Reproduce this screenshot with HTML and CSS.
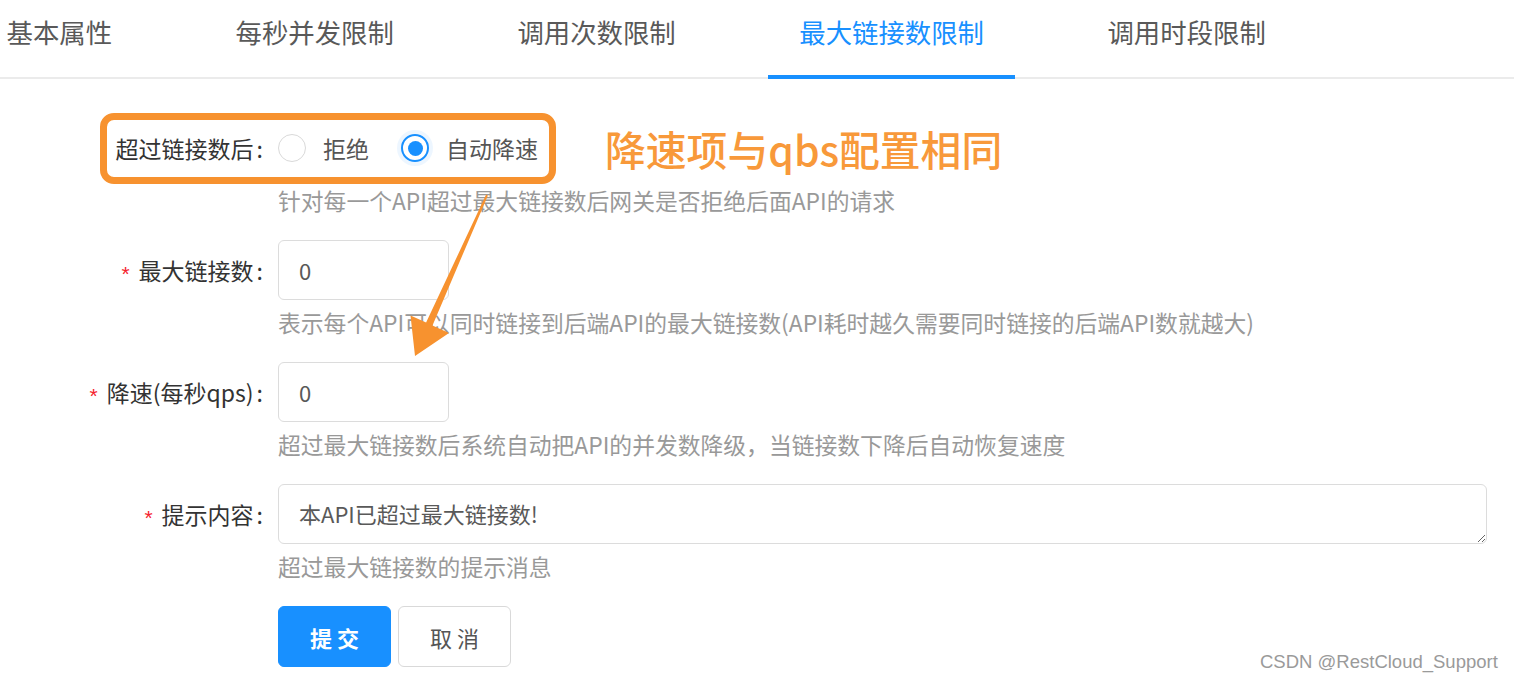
FILE: index.html
```html
<!DOCTYPE html>
<html lang="zh-CN">
<head>
<meta charset="utf-8">
<title>最大链接数限制</title>
<link rel="stylesheet" href="styles.css">
</head>
<body>
<div class="page">
  <nav class="tabs">
    <div class="tab">基本属性</div>
    <div class="tab">每秒并发限制</div>
    <div class="tab">调用次数限制</div>
    <div class="tab active">最大链接数限制</div>
    <div class="tab">调用时段限制</div>
  </nav>

  <form class="form">
    <div class="item">
      <div class="row">
        <label class="label">超过链接数后<span class="colon">:</span></label>
        <div class="control radios">
          <span class="radio"><span class="dot"></span><span class="rtext">拒绝</span></span>
          <span class="radio checked"><span class="dot"></span><span class="rtext">自动降速</span></span>
        </div>
      </div>
      <div class="hint">针对每一个API超过最大链接数后网关是否拒绝后面API的请求</div>
    </div>

    <div class="item">
      <div class="row">
        <label class="label"><span class="req">*</span>最大链接数<span class="colon">:</span></label>
        <div class="control"><input class="input small" value="0"></div>
      </div>
      <div class="hint">表示每个API可以同时链接到后端API的最大链接数(API耗时越久需要同时链接的后端API数就越大)</div>
    </div>

    <div class="item">
      <div class="row">
        <label class="label"><span class="req">*</span>降速(每秒qps)<span class="colon">:</span></label>
        <div class="control"><input class="input small" value="0"></div>
      </div>
      <div class="hint">超过最大链接数后系统自动把API的并发数降级，当链接数下降后自动恢复速度</div>
    </div>

    <div class="item">
      <div class="row">
        <label class="label"><span class="req">*</span>提示内容<span class="colon">:</span></label>
        <div class="control wide"><textarea class="textarea">本API已超过最大链接数!</textarea></div>
      </div>
      <div class="hint">超过最大链接数的提示消息</div>
    </div>

    <div class="actions">
      <button type="button" class="btn primary">提 交</button>
      <button type="button" class="btn">取 消</button>
    </div>
  </form>

  <div class="note-box"></div>
  <div class="note-text">降速项与qbs配置相同</div>
  <svg class="note-arrow" width="1514" height="681" viewBox="0 0 1514 681">
    <polygon points="486.1,194.6 487.9,195.4 432.5,325.4 449,333 415,356 410.5,315.5 426.1,322.6" fill="#f7922f"/>
  </svg>
  <div class="watermark">CSDN @RestCloud_Support</div>
</div>
</body>
</html>
```

FILE: styles.css
```css
html, body {
  margin: 0;
  padding: 0;
  background: #fff;
}
body {
  width: 1514px;
  height: 681px;
  overflow: hidden;
  font-family: "Noto Sans CJK SC", "Noto Sans", sans-serif;
  color: #333;
}
.page {
  position: relative;
  width: 1514px;
  height: 681px;
  overflow: hidden;
}

/* Tabs */
.tabs {
  display: flex;
  height: 77px;
  border-bottom: 2px solid #ebebeb;
  margin-left: -25px;
}
.tab {
  position: relative;
  padding: 0 31.5px;
  margin-right: 60.5px;
  font-size: 26.4px;
  line-height: 64px;
  color: #595959;
  white-space: nowrap;
}
.tab.active {
  color: #1890ff;
}
.tab.active::after {
  content: "";
  position: absolute;
  left: 0;
  right: 0;
  bottom: -2px;
  height: 4px;
  background: #1890ff;
}

/* Form */
.form {
  padding-top: 39px;
}
.item {
  margin-bottom: 22px;
}
.row {
  display: flex;
  align-items: center;
  height: 60px;
}
.label {
  width: 278px;
  flex: none;
  box-sizing: border-box;
  padding-right: 15px;
  text-align: right;
  font-size: 23px;
  color: #333;
  white-space: nowrap;
}
.colon {
  margin-left: 3px;
}
.req {
  color: #f5222d;
  font-family: "Liberation Sans", sans-serif;
  font-size: 21px;
  margin-right: 9px;
  position: relative;
  top: 1px;
}
.control {
  display: flex;
  align-items: center;
}
.control.wide {
  width: 1209px;
}
.hint {
  margin-left: 278px;
  padding-top: 6px;
  font-size: 22.8px;
  line-height: 34px;
  color: #999;
  white-space: nowrap;
}

/* Radios */
.radios {
  gap: 32px;
}
.radio {
  display: inline-flex;
  align-items: center;
  font-size: 23px;
  color: #555;
}
.dot {
  width: 28px;
  height: 28px;
  box-sizing: border-box;
  border: 1.5px solid #d9d9d9;
  border-radius: 50%;
  margin-right: 17px;
  position: relative;
}
.radio.checked .dot {
  border: 2.5px solid #1890ff;
  box-shadow: 0 0 0 4px rgba(24, 144, 255, 0.08);
}
.radio.checked .dot::after {
  content: "";
  position: absolute;
  left: 50%;
  top: 50%;
  width: 15px;
  height: 15px;
  margin: -7.5px 0 0 -7.5px;
  border-radius: 50%;
  background: #1890ff;
}

/* Inputs */
.input, .textarea {
  box-sizing: border-box;
  border: 1.5px solid #dcdcdc;
  border-radius: 6px;
  background: #fff;
  font-family: "Noto Sans CJK SC", "Noto Sans", sans-serif;
  font-size: 22px;
  color: #595959;
  outline: none;
}
.input.small {
  width: 171px;
  height: 60px;
  padding: 0 20px;
}
.textarea {
  width: 1209px;
  height: 60px;
  padding: 10px 20px;
  line-height: 36px;
  resize: vertical;
  display: block;
}

/* Buttons */
.actions {
  display: flex;
  gap: 7px;
  margin-left: 278px;
  margin-top: 3px;
}
.btn {
  width: 113px;
  height: 61px;
  box-sizing: border-box;
  border: 1.5px solid #d9d9d9;
  border-radius: 6px;
  background: #fff;
  font-family: "Noto Sans CJK SC", "Noto Sans", sans-serif;
  font-size: 22px;
  color: #555;
  padding: 0;
}
.btn.primary {
  background: #1890ff;
  border-color: #1890ff;
  color: #fff;
  font-weight: 700;
}

/* Annotations */
.note-box {
  position: absolute;
  left: 100px;
  top: 113px;
  width: 456px;
  height: 71px;
  box-sizing: border-box;
  border: 7px solid #f7922f;
  border-radius: 14px;
}
.note-text {
  position: absolute;
  left: 605px;
  top: 121px;
  font-size: 40.8px;
  line-height: 56px;
  font-weight: 500;
  color: #f8993a;
  white-space: nowrap;
}
.note-arrow {
  position: absolute;
  left: 0;
  top: 0;
  pointer-events: none;
}
.watermark {
  position: absolute;
  left: 1260px;
  top: 650px;
  font-family: "Liberation Sans", Arial, sans-serif;
  font-size: 18.5px;
  line-height: 24px;
  color: #9a9a9a;
  white-space: nowrap;
}
```
